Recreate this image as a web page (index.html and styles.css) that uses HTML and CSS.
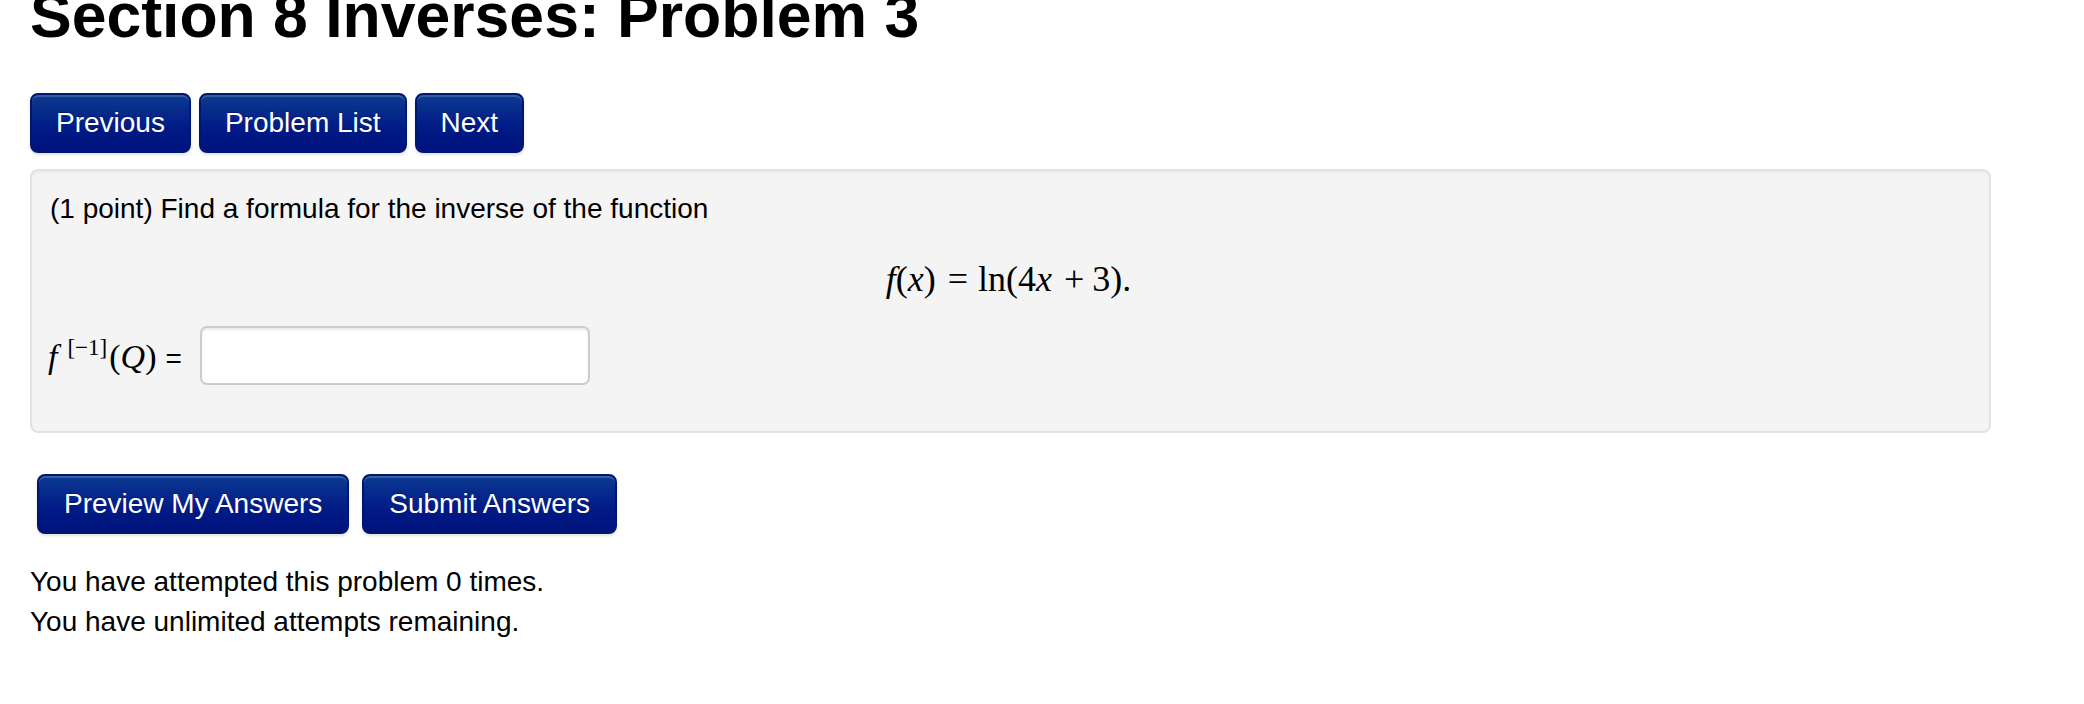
FILE: index.html
```html
<!DOCTYPE html>
<html lang="en">
<head>
<meta charset="utf-8">
<title>Section 8 Inverses: Problem 3</title>
<link rel="stylesheet" href="styles.css">
</head>
<body>
<h1 class="title">Section 8 Inverses: Problem 3</h1>
<nav class="nav-buttons">
  <a class="btn" href="#">Previous</a>
  <a class="btn" href="#">Problem List</a>
  <a class="btn" href="#">Next</a>
</nav>
<div class="well">
  <p class="prompt">(1 point) Find a formula for the inverse of the function</p>
  <div class="display-math"><span class="mi">f</span>(<span class="mi">x</span>)<span class="rel">=</span>ln(4<span class="mi">x</span><span class="bin">+</span>3).</div>
  <div class="answer-row">
    <label class="answer-label" for="ans"><span class="math"><span class="mi f">f</span><span class="sup">[−1]</span>(<span class="mi">Q</span>)</span><span class="eq">=</span></label>
    <input class="answer" id="ans" type="text">
  </div>
</div>
<div class="submit-buttons">
  <a class="btn btn-wide" href="#">Preview My Answers</a>
  <a class="btn btn-wide" href="#">Submit Answers</a>
</div>
<p class="attempts">You have attempted this problem 0 times.<br>You have unlimited attempts remaining.</p>
</body>
</html>
```

FILE: styles.css
```css
html, body {
  background: #ffffff;
}
body {
  margin: 0;
  padding: 0 0 0 30px;
  font-family: "Liberation Sans", Arial, Helvetica, sans-serif;
  font-size: 28px;
  line-height: 40px;
  color: #000;
}
.title {
  margin: -16px 0 0;
  font-size: 62.5px;
  line-height: 62.5px;
  font-weight: bold;
  color: #000;
}
.nav-buttons {
  display: flex;
  gap: 8px;
  margin-top: 46px;
}
.btn {
  display: inline-block;
  padding: 8px 24px;
  border: 2px solid #00176f;
  border-radius: 8px;
  background: linear-gradient(to bottom, #0c3a90 0%, #001a86 60%, #00127c 100%);
  box-shadow: inset 0 2px 0 rgba(255,255,255,0.18), 0 2px 3px rgba(0,0,0,0.12);
  color: #fff;
  text-decoration: none;
  font-size: 28px;
  line-height: 40px;
  text-shadow: 0 -1px 0 rgba(0,0,0,0.25);
  white-space: nowrap;
}
.btn-wide {
  padding: 8px 25px;
}
.well {
  box-sizing: border-box;
  width: 1961px;
  margin-top: 16px;
  padding: 18px 18px 18px 18px;
  background: #f4f4f4;
  border: 2px solid #e2e2e2;
  border-radius: 8px;
  box-shadow: inset 0 2px 2px rgba(0,0,0,0.04);
}
.prompt {
  margin: 0;
}
.display-math {
  margin: 30px 0 0;
  text-align: center;
  font-family: "Liberation Serif", "Times New Roman", serif;
  font-size: 36px;
  line-height: 40px;
  padding-right: 4px;
}
.mi {
  font-style: italic;
}
.rel {
  margin: 0 10px 0 12px;
}
.bin {
  margin: 0 8px 0 12px;
}
.answer-row {
  display: flex;
  align-items: center;
  margin: 27px 0 28px;
  height: 59px;
}
.answer-label {
  display: flex;
  align-items: baseline;
  margin-left: -2px;
  padding-top: 8px;
}
.math {
  font-family: "Liberation Serif", "Times New Roman", serif;
  font-size: 34px;
  line-height: 40px;
}
.sup {
  font-size: 23px;
  position: relative;
  top: -13px;
  margin-left: 10px;
  margin-right: 2px;
}
.eq {
  margin-left: 9px;
  font-size: 28px;
}
.answer {
  box-sizing: border-box;
  width: 390px;
  height: 59px;
  margin-left: 18px;
  padding: 8px 12px;
  border: 2px solid #cccccc;
  border-radius: 7px;
  background: #fff;
  box-shadow: inset 0 2px 2px rgba(0,0,0,0.08);
  font-family: "Liberation Sans", Arial, sans-serif;
  font-size: 28px;
}
.submit-buttons {
  display: flex;
  gap: 13px;
  margin: 41px 0 0 7px;
}
.attempts {
  margin: 28px 0 0;
}
```
